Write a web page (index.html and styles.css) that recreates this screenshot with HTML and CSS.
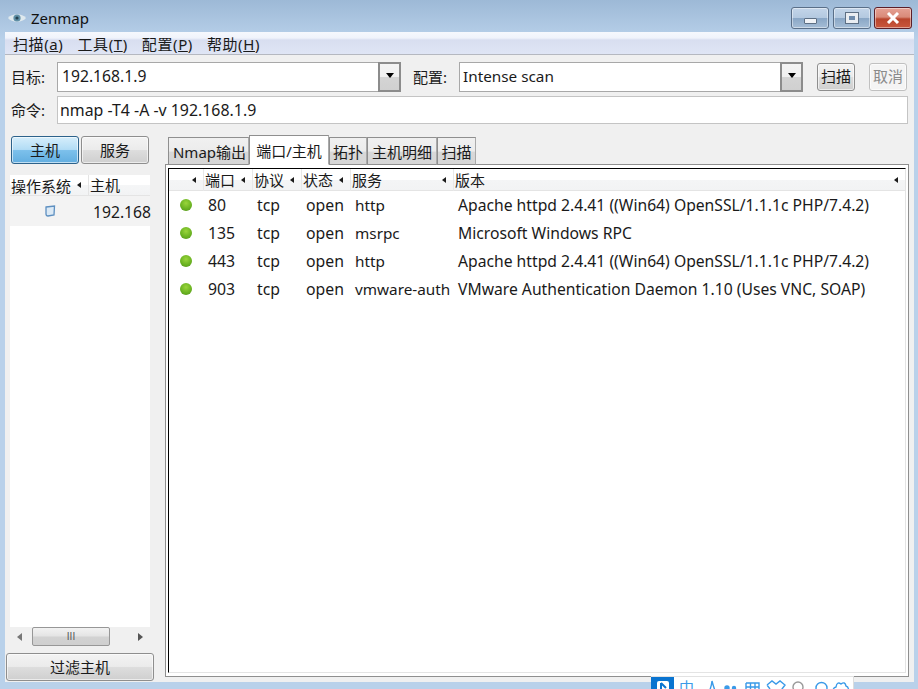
FILE: index.html
```html
<!DOCTYPE html>
<html lang="zh-CN">
<head>
    <meta charset="UTF-8">
    <title>Zenmap</title>
    <link rel="stylesheet" href="styles.css">
</head>
<body>
<div class="window">
    <!-- Title bar -->
    <div class="titlebar">
        <svg class="app-icon" width="18" height="12" viewBox="0 0 18 12">
            <path d="M0 6 C4 1 14 1 18 6 C14 11 4 11 0 6Z" fill="#dfe9ee"/>
            <circle cx="9" cy="6" r="3.6" fill="#5f8fa6"/>
            <circle cx="9" cy="6" r="1.6" fill="#24414f"/>
        </svg>
        <span class="app-title">Zenmap</span>
        <div class="win-buttons">
            <div class="win-btn"><span class="min-glyph"></span></div>
            <div class="win-btn"><span class="max-glyph"></span></div>
            <div class="win-btn close">
                <svg width="14" height="12" viewBox="0 0 14 12"><path d="M2 1 L12 11 M12 1 L2 11" stroke="#fff" stroke-width="3"/></svg>
            </div>
        </div>
    </div>

    <div class="client">
        <!-- Menu -->
        <div class="menubar">
            <span>扫描(<u>a</u>)</span>
            <span>工具(<u>T</u>)</span>
            <span>配置(<u>P</u>)</span>
            <span>帮助(<u>H</u>)</span>
        </div>

        <!-- Target and profile -->
        <div class="toolbar">
            <label class="target-label">目标:</label>
            <div class="combo target-combo">
                <span class="combo-text">192.168.1.9</span>
                <span class="combo-btn"><i class="combo-arrow"></i></span>
            </div>
            <label class="profile-label">配置:</label>
            <div class="combo profile-combo">
                <span class="combo-text">Intense scan</span>
                <span class="combo-btn"><i class="combo-arrow"></i></span>
            </div>
            <button class="btn small-btn">扫描</button>
            <button class="btn small-btn disabled">取消</button>
        </div>
        <div class="command-row">
            <label class="command-label">命令:</label>
            <div class="command-input">nmap -T4 -A -v 192.168.1.9</div>
        </div>

        <div class="main">
            <!-- Left side -->
            <div class="sidebar">
                <div class="side-tabs">
                    <button class="btn side-btn active">主机</button>
                    <button class="btn side-btn">服务</button>
                </div>
                <div class="host-list">
                    <div class="host-head">
                        <div class="host-col-os">操作系统<i class="sort-arrow"></i></div>
                        <div class="host-col-name">主机</div>
                    </div>
                    <div class="host-row">
                        <div class="host-col-os">
                            <svg width="12" height="13" viewBox="0 0 12 13">
                                <path d="M2 2 L10.500 1 L10 10 L4 11 Q2 11 2 9Z" fill="#dbe9f5" stroke="#5d8fc0" stroke-width="1.300"/>
                            </svg>
                        </div>
                        <div class="host-col-name host-ip">192.168</div>
                    </div>
                    <div class="host-empty"></div>
                    <div class="hscroll">
                        <i class="scroll-left"></i>
                        <div class="scroll-track">
                            <div class="scroll-thumb">III</div>
                        </div>
                        <i class="scroll-right"></i>
                    </div>
                </div>
                <button class="btn filter-btn">过滤主机</button>
            </div>

            <!-- Right side -->
            <div class="content">
                <div class="tabs">
                    <div class="tab tab-nmap">Nmap输出</div>
                    <div class="tab tab-current">端口/主机</div>
                    <div class="tab tab-topo">拓扑</div>
                    <div class="tab tab-detail">主机明细</div>
                    <div class="tab tab-scan">扫描</div>
                </div>
                <div class="tab-page">
                    <div class="ports">
                        <div class="ports-head ports-grid">
                            <div class="head-cell"><i class="sort-arrow"></i></div>
                            <div class="head-cell">端口<i class="sort-arrow"></i></div>
                            <div class="head-cell">协议<i class="sort-arrow"></i></div>
                            <div class="head-cell">状态<i class="sort-arrow"></i></div>
                            <div class="head-cell">服务<i class="sort-arrow"></i></div>
                            <div class="head-cell">版本<i class="sort-arrow"></i></div>
                        </div>
                        <div class="ports-row ports-grid">
                            <div><i class="dot"></i></div><div>80</div><div>tcp</div><div>open</div><div class="service">http</div>
                            <div class="version">Apache httpd 2.4.41 ((Win64) OpenSSL/1.1.1c PHP/7.4.2)</div>
                        </div>
                        <div class="ports-row ports-grid">
                            <div><i class="dot"></i></div><div>135</div><div>tcp</div><div>open</div><div class="service">msrpc</div>
                            <div class="version">Microsoft Windows RPC</div>
                        </div>
                        <div class="ports-row ports-grid">
                            <div><i class="dot"></i></div><div>443</div><div>tcp</div><div>open</div><div class="service">http</div>
                            <div class="version">Apache httpd 2.4.41 ((Win64) OpenSSL/1.1.1c PHP/7.4.2)</div>
                        </div>
                        <div class="ports-row ports-grid">
                            <div><i class="dot"></i></div><div>903</div><div>tcp</div><div>open</div><div class="service">vmware-auth</div>
                            <div class="version">VMware Authentication Daemon 1.10 (Uses VNC, SOAP)</div>
                        </div>
                    </div>
                </div>
            </div>
        </div>
    </div>

    <!-- IME bar, sits over the window corner -->
    <div class="ime-bar">
        <span class="ime-logo">
            <svg width="12" height="9" viewBox="0 0 12 9">
                <rect width="12" height="12" rx="2" fill="#fff"/>
                <path d="M4 2 L4 9 M4 2 L9 7" stroke="#0a74d0" stroke-width="2" fill="none"/>
            </svg>
        </span>
        <span class="ime-item">中</span>
        <svg class="ime-svg" width="146" height="16" viewBox="0 0 146 16" fill="none" stroke="#3a9ae8" stroke-width="1.400">
            <path d="M2 15 Q6 10 7 1 Q9 9 12 15"/>
            <circle cx="22" cy="8" r="2" fill="#3a9ae8"/>
            <circle cx="29" cy="8" r="1.500" fill="#3a9ae8"/>
            <path d="M41 3 H54 V16 M41 3 V16 M45.500 3 V16 M50 3 V16 M41 7 H54"/>
            <path d="M62 5 L67 1 L71 4 L75 1 L80 5 L77 9 V16 M65 9 V16 M62 5 L65 9"/>
            <circle cx="93" cy="7" r="5" stroke="#9a9a9a"/>
            <circle cx="116.500" cy="8" r="5.500"/>
            <path d="M130 16 Q126 8 131 7 Q132 1 136 4 Q140 1 141 6 Q145 7 143 16"/>
        </svg>
    </div>
</div>
</body>
</html>
```

FILE: styles.css
```css
* {
    box-sizing: border-box;
}

html, body {
    margin: 0;
    padding: 0;
    overflow: hidden;
}

body {
    font-family: "Noto Sans", "Noto Sans CJK SC", sans-serif;
    font-size: 15px;
    color: #1a1a1a;
}

.window {
    position: relative;
    width: 918px;
    height: 689px;
    padding: 0 4px 7px 5px;
    display: flex;
    flex-direction: column;
    background: linear-gradient(to bottom, #9db9d6 0, #b9d1ea 40px);
    overflow: hidden;
}

/* Title bar */
.titlebar {
    height: 32px;
    flex: none;
    display: flex;
    align-items: flex-start;
}

.app-icon {
    margin: 12px 0 0 3px;
}

.app-title {
    margin: 8px 0 0 5px;
    font-size: 15px;
    line-height: 20px;
    color: #111;
}

.win-buttons {
    margin-left: auto;
    margin-top: 7px;
    margin-right: -4px;
    padding-right: 6px;
    display: flex;
    gap: 3.500px;
}

.win-btn {
    width: 38px;
    height: 22px;
    display: flex;
    align-items: center;
    justify-content: center;
    border: 1px solid #5a6f88;
    border-radius: 3px;
    background: linear-gradient(to bottom, #c3d5e9 0, #b4c9e0 48%, #8aa7c6 52%, #a5bdd6 100%);
    box-shadow: inset 0 0 0 1px rgba(255, 255, 255, 0.45);
}

.win-btn.close {
    border-color: #5c1f28;
    background: linear-gradient(to bottom, #e5a194 0, #d98a79 45%, #b9452d 55%, #c9573d 100%);
}

.min-glyph {
    width: 13px;
    height: 6px;
    margin-top: 6px;
    background: #f0f3f7;
    border: 1px solid #5d6f84;
    border-radius: 1px;
}

.max-glyph {
    width: 12px;
    height: 10px;
    background: #6f8cad;
    border: 3px solid #e9edf2;
    outline: 1px solid #5d6f84;
}

.client {
    flex: 1;
    min-height: 0;
    display: flex;
    flex-direction: column;
    background: #f0f0f0;
}

/* Menu */
.menubar {
    height: 23px;
    flex: none;
    padding-left: 8px;
    display: flex;
    gap: 14px;
    align-items: center;
    background: linear-gradient(to bottom, #f6f8fd 0, #f0f3fb 6px, #d8def0 8px, #dfe5f5 100%);
    border-bottom: 1px solid #b5b8c0;
}

.menubar span {
    margin-top: 1px;
    letter-spacing: 0.600px;
}

/* Target row */
.toolbar {
    height: 31px;
    margin-top: 6px;
    flex: none;
    display: flex;
    align-items: center;
}

.target-label {
    margin-left: 6px;
    width: 46px;
    margin-bottom: 1px;
}

.profile-label {
    margin-left: 12px;
    width: 46px;
    margin-bottom: 1px;
}

.combo {
    width: 344px;
    height: 30px;
    display: flex;
    border: 1px solid #a8a8a8;
    background: #fff;
}

.combo-text {
    flex: 1;
    padding-left: 3px;
    line-height: 27px;
    font-size: 15.300px;
}

.target-combo .combo-text {
    padding-left: 4px;
    font-size: 15.700px;
}

.combo-btn {
    width: 23px;
    margin: -1px -1px -1px 0;
    display: flex;
    align-items: center;
    justify-content: center;
    padding-bottom: 2px;
    border: 2px solid #8c8c8c;
    background: linear-gradient(to bottom, #f3f3f3 0, #f0f0f0 48%, #d4d4d4 52%, #d0d0d0 100%);
}

.combo-arrow {
    width: 0;
    height: 0;
    border-left: 4.500px solid transparent;
    border-right: 4.500px solid transparent;
    border-top: 5px solid #000;
}

.btn {
    font-family: inherit;
    font-size: 15px;
    color: #1a1a1a;
    padding: 0 0 2px;
    border: 1px solid #8e8e8e;
    border-radius: 3px;
    background: linear-gradient(to bottom, #f3f3f3 0, #ebebeb 48%, #dddddd 52%, #cfcfcf 100%);
    box-shadow: inset 0 0 0 1px rgba(255, 255, 255, 0.6);
}

.small-btn {
    width: 38px;
    height: 28px;
    margin-left: 14px;
}

.disabled {
    color: #8b8b8b;
    background: #f4f4f4;
    border-color: #c0c0c0;
}

/* Command row */
.command-row {
    height: 28px;
    margin-top: 4px;
    flex: none;
    display: flex;
    align-items: center;
}

.command-label {
    margin-left: 6px;
    width: 46px;
    margin-bottom: 1px;
}

.command-input {
    width: 851px;
    height: 28px;
    padding-left: 2px;
    line-height: 26px;
    font-size: 15.900px;
    background: #fff;
    border: 1px solid #c4c4c4;
}

/* Main area */
.main {
    flex: 1;
    min-height: 0;
    display: flex;
    margin-top: 12px;
}

.sidebar {
    width: 160px;
    flex: none;
    display: flex;
    flex-direction: column;
    padding-left: 1px;
}

.side-tabs {
    display: flex;
    gap: 2px;
    padding-left: 5px;
}

.side-btn {
    width: 68px;
    height: 28px;
}

.side-btn.active {
    border-color: #2c628b;
    background: linear-gradient(to bottom, #d6eefb 0, #b2dcf5 48%, #7cc0eb 52%, #62aee0 100%);
}

.host-list {
    flex: 1;
    min-height: 0;
    width: 140px;
    margin: 11px 0 0 4px;
    display: flex;
    flex-direction: column;
    background: #fff;
}

.host-head {
    height: 21px;
    flex: none;
    display: flex;
    border-bottom: 1px solid #e4e4e4;
    background: linear-gradient(to bottom, #fff 0, #fff 50%, #f5f6f7 52%, #f2f3f4 100%);
}

.host-col-os {
    width: 78px;
    flex: none;
    display: flex;
    align-items: center;
    padding-left: 1px;
    white-space: nowrap;
}

.host-head .host-col-name {
    padding-left: 1px;
    line-height: 21px;
    border-left: 1px solid #e4e4e4;
}

.host-col-name {
    flex: 1;
    min-width: 0;
    white-space: nowrap;
}

.sort-arrow {
    width: 0;
    height: 0;
    margin-left: auto;
    margin-right: 7px;
    border-top: 3.500px solid transparent;
    border-bottom: 3.500px solid transparent;
    border-right: 4px solid #1a1a1a;
}

.host-row {
    height: 30px;
    flex: none;
    display: flex;
    align-items: center;
    background: #f3f3f3;
}

.host-row .host-col-os {
    padding-left: 34px;
}

.host-ip {
    padding: 1px 0 0 5px;
    font-size: 15.700px;
}

.host-empty {
    flex: 1;
}

.hscroll {
    height: 19px;
    flex: none;
    display: flex;
    align-items: center;
    background: #f0f0f0;
}

.scroll-left, .scroll-right {
    width: 0;
    height: 0;
    border-top: 4px solid transparent;
    border-bottom: 4px solid transparent;
}

.scroll-left {
    margin-left: 7px;
    border-right: 5px solid #777;
}

.scroll-right {
    margin-right: 7px;
    border-left: 5px solid #555;
}

.scroll-track {
    flex: 1;
    height: 19px;
    padding-left: 10px;
}

.scroll-thumb {
    width: 78px;
    height: 19px;
    text-align: center;
    font-family: "Liberation Sans", sans-serif;
    font-size: 10px;
    line-height: 17px;
    color: #555;
    border: 1px solid #979797;
    border-radius: 2px;
    background: linear-gradient(to bottom, #f2f2f2 0, #e4e4e4 48%, #d2d2d2 52%, #cfcfcf 100%);
}

.filter-btn {
    width: 148px;
    height: 28px;
    margin: 7px 0 1px 0;
}

.content {
    flex: 1;
    min-width: 0;
    display: flex;
    flex-direction: column;
}

/* Tabs */
.tabs {
    height: 29px;
    flex: none;
    display: flex;
    align-items: flex-end;
    padding-left: 3px;
    position: relative;
    z-index: 1;
}

.tab {
    height: 28px;
    text-align: center;
    line-height: 29px;
    white-space: nowrap;
    border: 1px solid #8f8f8f;
    border-right: 1px solid #aaa;
    border-bottom: 1px solid #8f8f8f;
    background: linear-gradient(to bottom, #f0f0f0 0, #ececec 50%, #d8d8d8 55%, #d6d6d6 100%);
}

.tab-nmap {
    width: 81px;
    padding-left: 2px;
}

.tab-current {
    width: 80px;
    height: 30px;
    line-height: 31px;
    background: #fff;
    border-bottom: 1px solid #fff;
}

.tab-topo {
    width: 38px;
}

.tab-detail {
    width: 70px;
}

.tab-scan {
    width: 39px;
}

.tab-page {
    width: 744px;
    height: 513px;
    padding: 3px 2px;
    margin-top: -1px;
    background: #fff;
    border: 1px solid #8f8f8f;
}

.ports {
    height: 100%;
    border-style: solid;
    border-width: 1px;
    border-color: #000 #e4e4e4 #e4e4e4 #000;
    background: #fff;
}

/* Ports table */
.ports-grid {
    display: grid;
    grid-template-columns: 34px 49px 49px 49px 103px 452px;
}

.ports-head {
    height: 22px;
    line-height: 22px;
    border-bottom: 1px solid #e4e4e4;
    background: linear-gradient(to bottom, #fff 0, #fff 50%, #f4f5f6 52%, #f2f3f4 100%);
}

.head-cell {
    display: flex;
    align-items: center;
    padding-left: 1px;
    border-left: 1px solid #e8e8e8;
}

.head-cell:first-child {
    border-left: 0;
}

.ports-row {
    height: 28px;
    align-items: center;
    font-size: 15.800px;
    white-space: nowrap;
}

.ports-row > div {
    padding-left: 5px;
}

.ports-row > div:first-child {
    padding-left: 11px;
    display: flex;
}

.ports-row > .service {
    font-size: 15.300px;
}

.ports-row > .version {
    font-size: 15.700px;
}

.dot {
    width: 12px;
    height: 12px;
    border-radius: 50%;
    background: radial-gradient(circle at 50% 35%, #9ad53c 0, #6cb422 55%, #4e8f1a 100%);
}

/* IME bar */
.ime-bar {
    position: absolute;
    left: 651px;
    top: 676px;
    width: 203px;
    height: 13px;
    display: flex;
    align-items: flex-start;
    background: #fff;
    border-top: 1px solid #e2e2e2;
    border-right: 1px solid #ddd;
    overflow: hidden;
}

.ime-logo {
    width: 23px;
    height: 13px;
    padding: 4px 0 0 6px;
    flex: none;
    background: #0a74d0;
}

.ime-logo svg {
    display: block;
}

.ime-item {
    margin: 0 0 0 5px;
    font-size: 15px;
    line-height: 21px;
    color: #3a9ae8;
}

.ime-svg {
    margin: 3px 0 0 11px;
    flex: none;
}
```
